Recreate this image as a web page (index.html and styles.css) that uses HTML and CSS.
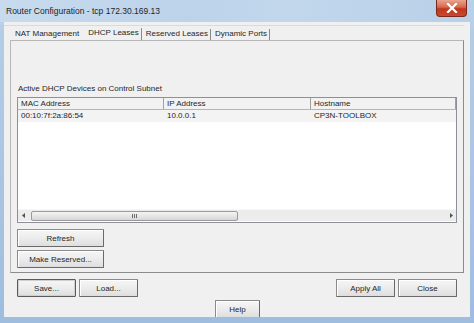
FILE: index.html
```html
<!DOCTYPE html>
<html>
<head>
<meta charset="utf-8">
<link rel="stylesheet" href="styles.css">
</head>
<body>
<div class="window">
  <div class="titlebar">
    <span class="title">Router Configuration - tcp 172.30.169.13</span>
    <div class="close">
      <svg width="12" height="10" viewBox="0 0 12 10"><path d="M2 1 L10 9 M10 1 L2 9" stroke="#fff" stroke-width="2.2" stroke-linecap="square"/></svg>
    </div>
  </div>
  <div class="client">
    <div class="frame">
      <div class="tabs">
        <div class="tab first">NAT Management</div>
        <div class="tab active">DHCP Leases</div>
        <div class="tab">Reserved Leases</div>
        <div class="tab">Dynamic Ports</div>
      </div>
      <div class="panel">
        <div class="label">Active DHCP Devices on Control Subnet</div>
        <div class="list">
          <div class="lhead">
            <div class="c c1">MAC Address</div>
            <div class="c c2">IP Address</div>
            <div class="c c3">Hostname</div>
          </div>
          <div class="lrow">
            <div class="c c1">00:10:7f:2a:86:54</div>
            <div class="c c2">10.0.0.1</div>
            <div class="c c3">CP3N-TOOLBOX</div>
          </div>
          <div class="lbody"></div>
          <div class="hscroll">
            <div class="arrow">
              <svg width="4" height="5" viewBox="0 0 4 5"><path d="M3 0 L0 2.5 L3 5 Z" fill="#505050"/></svg>
            </div>
            <div class="track">
              <div class="thumb"><span class="grip"></span><span class="grip"></span><span class="grip"></span></div>
            </div>
            <div class="arrow">
              <svg width="4" height="5" viewBox="0 0 4 5"><path d="M1 0 L4 2.5 L1 5 Z" fill="#505050"/></svg>
            </div>
          </div>
        </div>
        <div class="btncol">
          <button class="btn wide">Refresh</button>
          <button class="btn wide">Make Reserved...</button>
        </div>
      </div>
      <div class="bottom">
        <div class="grp">
          <button class="btn mid def">Save...</button>
          <button class="btn mid">Load...</button>
        </div>
        <div class="grp">
          <button class="btn mid">Apply All</button>
          <button class="btn mid">Close</button>
        </div>
      </div>
      <div class="helprow">
        <button class="btn help">Help</button>
      </div>
    </div>
  </div>
</div>
</body>
</html>
```

FILE: styles.css
```css
* { box-sizing: border-box; }
html, body { margin: 0; padding: 0; }
body {
  width: 474px;
  height: 323px;
  overflow: hidden;
  font-family: "Liberation Sans", Arial, sans-serif;
  font-size: 8px;
  color: #262626;
}
.window {
  width: 474px;
  height: 323px;
  background: linear-gradient(180deg, #c4d8ec 0%, #b4cde6 10%, #a9c4e2 60%, #9ebddf 100%);
  display: flex;
  flex-direction: column;
}
.titlebar {
  height: 22px;
  display: flex;
  justify-content: space-between;
  align-items: flex-start;
  background: linear-gradient(90deg, #c8dbee 0%, #bcd3ea 40%, #c2d7ec 60%, #b8d0e8 100%);
}
.title {
  padding-left: 6px;
  padding-top: 6px;
  font-size: 8.5px;
  color: #1e1e1e;
}
.close {
  width: 31px;
  height: 17px;
  margin-right: 7px;
  border-radius: 0 0 4px 4px;
  border: 1px solid #7a2a1c;
  border-top: none;
  background: linear-gradient(180deg, #e8a590 0%, #d7674c 45%, #c0361c 55%, #c9482e 100%);
  display: flex;
  align-items: center;
  justify-content: center;
}
.client {
  margin-left: 4px;
  width: 466px;
  height: 295px;
  background: #f0f0f0;
  padding-top: 3px;
  overflow: hidden;
}
.frame {
  border-top: 1px solid #dadada;
  width: 460px;
  height: 292px;
}
.tabs {
  display: flex;
  height: 14px;
  padding-left: 8px;
  align-items: flex-end;
}
.tab {
  height: 11px;
  line-height: 10px;
  padding: 0 2px 0 3px;
  border-right: 1px solid #8a8a8a;
  margin-right: 1px;
  white-space: nowrap;
}
.tab.first {
  border-right: none;
  padding-right: 5px;
}
.tab.active {
  height: 12px;
  line-height: 9px;
}
.panel {
  margin-left: 6px;
  width: 454px;
  height: 233px;
  border: 1px solid #b8b8b8;
  border-right-color: #8c8c8c;
  border-bottom-color: #8c8c8c;
  padding: 43px 6px 0 6px;
}
.label {
  height: 10px;
  line-height: 10px;
  margin-bottom: 3px;
  padding-left: 1px;
}
.list {
  width: 440px;
  height: 126px;
  border: 1px solid #8d9197;
  background: #fff;
  display: flex;
  flex-direction: column;
}
.lhead {
  display: flex;
  height: 12px;
  background: #f2f2f2;
  border-bottom: 1px solid #b5b5b5;
}
.lhead .c {
  border-right: 1px solid #a0a0a0;
}
.c {
  line-height: 11px;
  padding-left: 3px;
  white-space: nowrap;
}
.c1 { width: 146px; }
.c2 { width: 147px; }
.c3 { flex: 1; }
.lhead .c3 { border-right: 1px solid #a0a0a0; }
.lrow {
  display: flex;
  height: 12px;
  background: #f3f3f3;
}
.lrow .c { line-height: 12px; }
.lbody { flex: 1; }
.hscroll {
  height: 12px;
  display: flex;
  background: #ececec;
  border-top: 1px solid #f6f6f6;
  margin-bottom: 1px;
}
.arrow {
  width: 11px;
  display: flex;
  align-items: center;
  justify-content: center;
}
.track {
  flex: 1;
  padding: 1px 2px;
}
.thumb {
  width: 207px;
  height: 10px;
  border: 1px solid #9a9a9a;
  border-radius: 2px;
  background: linear-gradient(180deg, #f4f4f4 0%, #e6e6e6 50%, #d6d6d6 100%);
  display: flex;
  justify-content: center;
  align-items: center;
  gap: 1px;
}
.grip {
  width: 1px;
  height: 4px;
  background: #6c6c6c;
}
.btncol {
  display: flex;
  flex-direction: column;
  gap: 3px;
  margin-top: 6px;
}
.btn {
  font-family: "Liberation Sans", Arial, sans-serif;
  font-size: 8px;
  color: #262626;
  height: 18px;
  padding: 0;
  border: 1px solid #8a8a8a;
  border-right-color: #6a6a6a;
  border-bottom-color: #6a6a6a;
  border-radius: 1px;
  background: linear-gradient(180deg, #f6f6f6 0%, #ececec 50%, #dedede 100%);
  box-shadow: inset 1px 1px 0 #ffffff;
}
.btn.wide { width: 87px; }
.btn.mid { width: 59px; }
.btn.def { border-color: #5a5a5a; box-shadow: inset 0 0 0 1px #cfcfcf; }
.btn.help { width: 45px; }
.bottom {
  display: flex;
  justify-content: space-between;
  padding: 6px 7px 0 13px;
}
.grp {
  display: flex;
  gap: 3px;
}
.helprow {
  padding-left: 211px;
  padding-top: 3px;
}
```
